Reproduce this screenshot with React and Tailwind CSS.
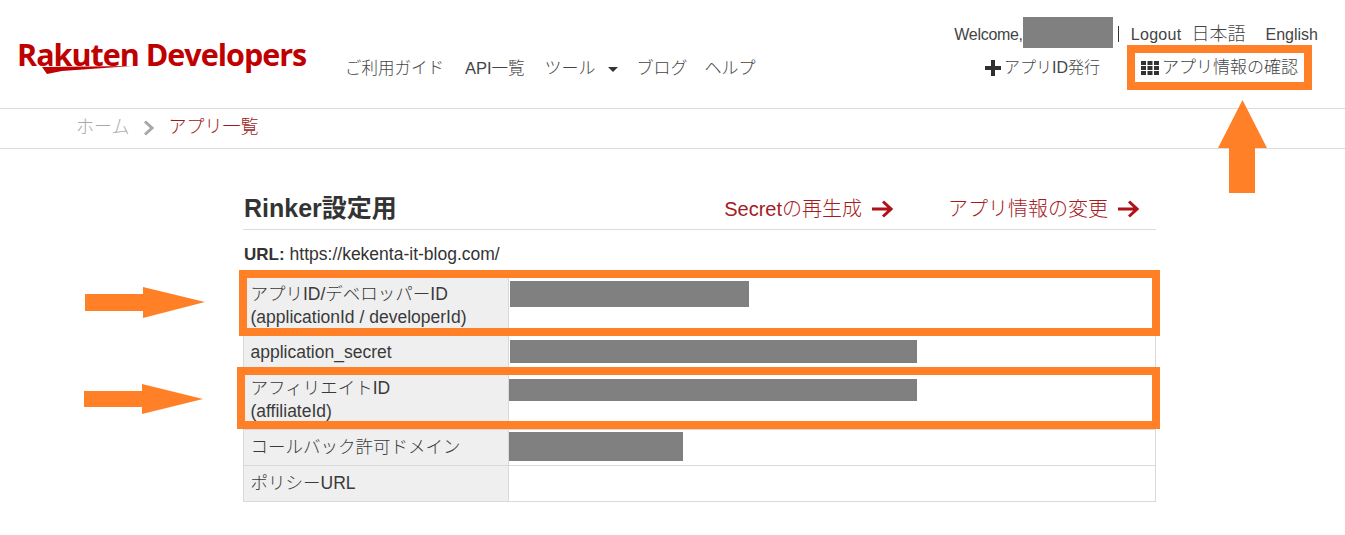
import React from "react";

const FONT = "[font-family:'Liberation_Sans','Noto_Sans_CJK_JP',sans-serif]";

function Redact({ className }) {
  return <div className={`bg-[#808080] ${className}`} />;
}

function ArrowR() {
  return (
    <svg width="21" height="18" viewBox="0 0 21 18" fill="none" stroke="#b01116" strokeWidth="3" className="shrink-0">
      <path d="M0 9h19M11 1.5 19 9l-8 7.5" />
    </svg>
  );
}

function Logo() {
  return (
    <div className="relative w-[289px] h-[36px] overflow-visible">
      <div className="text-[#bf0000] text-[30.500px] leading-[36px] font-bold tracking-[-1px] whitespace-nowrap [font-family:'Open_Sans','Liberation_Sans',sans-serif]">
        Rakuten Developers
      </div>
      <svg className="absolute left-[25px] top-[30px]" width="90" height="8" viewBox="0 0 90 8">
        <path d="M0 1 L90 0 L20 5 L5 8 Z" fill="#bf0000" />
      </svg>
    </div>
  );
}

function Header() {
  return (
    <header className="h-[109px] border-b border-[#dcdcdc] flex">
      <div className="pl-[17px] pt-[36px]">
        <Logo />
      </div>
      <nav className="ml-[39px] pt-[56px] flex items-start text-[16.500px] leading-[24px] text-[#444] font-light">
        <span>ご利用ガイド</span>
        <span className="ml-[21px]">API一覧</span>
        <span className="ml-[20px] mt-px flex items-center gap-[12px] text-[17px]">
          ツール
          <span className="w-0 h-0 border-x-[5px] border-x-transparent border-t-[5px] border-t-[#333]" />
        </span>
        <span className="ml-[19px] mt-px text-[17px]">ブログ</span>
        <span className="ml-[17px] mt-px text-[17px]">ヘルプ</span>
      </nav>
      <div className="ml-auto pr-[27px] pt-[17px] flex flex-col items-end text-[#444] font-light">
        <div className="h-[31px] flex items-center text-[16px] whitespace-nowrap">
          <span className="pt-[4px] tracking-[-0.3px]">Welcome,</span>
          <Redact className="w-[90px] h-[31px]" />
          <span className="w-px h-[16px] bg-[#333] ml-[5px] mt-[3px]" />
          <span className="ml-[12px] pt-[4px] tracking-[0.3px]">Logout</span>
          <span className="ml-[10px] pt-[4px] text-[18px]">日本語</span>
          <span className="ml-[20px] pt-[4px]">English</span>
        </div>
        <div className="mt-[8px] flex items-center text-[16px] leading-[24px] pr-[20px]">
          <svg width="16" height="16" viewBox="0 0 16 16" fill="#2f2f2f" className="mr-[3px]">
            <path d="M6 0h4v6h6v4h-6v6H6v-6H0V6h6z" />
          </svg>
          <span>アプリID発行</span>
          <svg width="18" height="16" viewBox="0 0 18 16" fill="#333" className="ml-[41px] mr-[3px]">
            <path d="M0 1h5v4H0zM6.500 1h5v4h-5zM13 1h5v4h-5zM0 6h5v4H0zM6.500 6h5v4h-5zM13 6h5v4h-5zM0 11h5v4H0zM6.500 11h5v4h-5zM13 11h5v4h-5z" />
          </svg>
          <span className="w-[136px] whitespace-nowrap text-[17px]">アプリ情報の確認</span>
        </div>
      </div>
    </header>
  );
}

function Breadcrumb() {
  return (
    <div className="h-[40px] border-b border-[#dcdcdc] pl-[76px] pb-[2px] flex items-center text-[18px] font-light">
      <span className="text-[#a8a8a8]">ホーム</span>
      <svg width="12" height="16" viewBox="0 0 12 16" fill="none" stroke="#a8a8a8" strokeWidth="3" className="ml-[14px] mr-[13px]">
        <path d="M2 1.500 9 8l-7 6.500" />
      </svg>
      <span className="text-[#9c1a1a]">アプリ一覧</span>
    </div>
  );
}

const rows = [
  { h: "h-[59px]", label: ["アプリID/デベロッパーID", "(applicationId / developerId)"], bar: "w-[239px] h-[26px] ml-[1px] mt-[4px]" },
  { h: "h-[35px]", label: ["application_secret"], bar: "w-[407px] h-[23px] ml-[1px] mt-[4px]" },
  { h: "h-[59px]", label: ["アフィリエイトID", "(affiliateId)"], bar: "w-[408px] h-[22px] mt-[8px]" },
  { h: "h-[36px]", label: ["コールバック許可ドメイン"], bar: "w-[174px] h-[29px] mt-[2px]" },
  { h: "h-[36px]", label: ["ポリシーURL"], bar: null },
];

function Table() {
  return (
    <table className="w-[913px] border-collapse table-fixed text-[17.500px] leading-[23px] text-[#3a3a3a]">
      <colgroup>
        <col className="w-[265px]" />
        <col />
      </colgroup>
      <tbody>
        {rows.map((r, i) => (
          <tr key={i} className={r.h}>
            <td className="border border-[#d9d9d9] bg-[#efefef] pl-[6.500px] pb-[1px] align-middle font-light">
              {r.label.map((l) => (
                <div key={l} className="whitespace-nowrap">{l}</div>
              ))}
            </td>
            <td className="border border-[#d9d9d9] p-0 align-top">
              {r.bar && <Redact className={r.bar} />}
            </td>
          </tr>
        ))}
      </tbody>
    </table>
  );
}

function Content() {
  return (
    <main className="ml-[243px] w-[913px]">
      <div className="mt-[29px] h-[52px] pt-[10px] border-b border-[#dcdcdc] flex items-center justify-between">
        <h2 className="ml-px text-[25px] font-bold text-[#333]">Rinker設定用</h2>
        <div className="flex items-center text-[20px] text-[#a51c1f] font-light pr-[17px]">
          <span>Secretの再生成</span>
          <span className="ml-[10px]"><ArrowR /></span>
          <span className="ml-[55px]">アプリ情報の変更</span>
          <span className="ml-[10px]"><ArrowR /></span>
        </div>
      </div>
      <p className="mt-[12px] mb-[9px] ml-px flex items-baseline text-[#333] leading-[24px]">
        <b className="text-[17px]">URL:</b>
        <span className="ml-[5px] text-[17.500px]">https://kekenta-it-blog.com/</span>
      </p>
      <Table />
    </main>
  );
}

function Annotations() {
  const o = "#ff8026";
  return (
    <>
      <div className="absolute left-[1127px] top-[45px] w-[185px] h-[45px] border-[8px] border-[#ff8026]" />
      <div className="absolute left-[239px] top-[270px] w-[921px] h-[66px] border-[8px] border-[#ff8026]" />
      <div className="absolute left-[237px] top-[367px] w-[923px] h-[62px] border-[8px] border-[#ff8026]" />
      <svg className="absolute left-[1218px] top-[100px]" width="50" height="94" viewBox="0 0 50 94">
        <path d="M24.500 0 49 48H37V93H11V48H0Z" fill={o} />
      </svg>
      <svg className="absolute left-[85px] top-[287px]" width="121" height="32" viewBox="0 0 121 32">
        <path d="M0 7H58V0L120 15 58 31V24H0Z" fill={o} />
      </svg>
      <svg className="absolute left-[84px] top-[384px]" width="120" height="31" viewBox="0 0 120 31">
        <path d="M0 7H58V0L119 15 58 30V23H0Z" fill={o} />
      </svg>
    </>
  );
}

export default function App() {
  return (
    <div className={`relative w-[1345px] h-[535px] overflow-hidden bg-white ${FONT}`}>
      <Header />
      <Breadcrumb />
      <Content />
      <Annotations />
    </div>
  );
}
